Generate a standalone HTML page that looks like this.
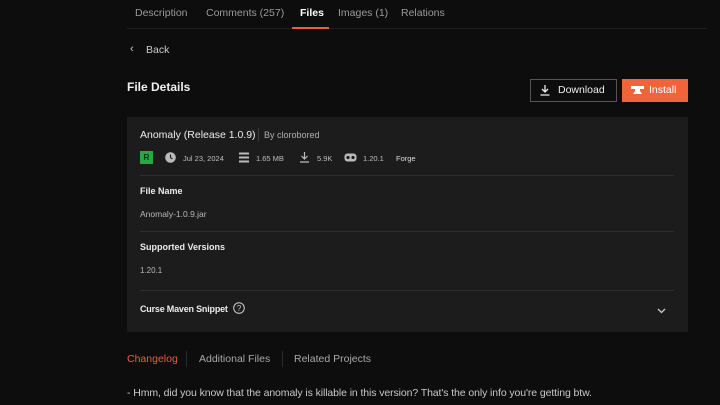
<!DOCTYPE html><html><head><style>
*{margin:0;padding:0;box-sizing:border-box}
body{width:720px;height:405px;overflow:hidden;background:#0d0d0d;font-family:"Liberation Sans",sans-serif;color:#e6e6e6;position:relative}
.a{position:absolute;white-space:nowrap}
.tab{font-size:10.5px;color:#9a9a9a;top:7px}
.line{position:absolute;left:140px;width:534px;height:1px;background:#2e2e2e}
.lbl{font-size:9px;font-weight:bold;color:#ececec}
.val{font-size:8.5px;color:#b8b8b8}
.m{font-size:7.5px;color:#bdbdbd;top:154px}
</style></head><body>
<div class="a" style="left:127px;top:28px;width:580px;height:1px;background:#1f1f1f"></div>
<div class="a tab" style="left:135px">Description</div>
<div class="a tab" style="left:206px">Comments (257)</div>
<div class="a tab" style="left:300px;color:#fff;font-weight:bold">Files</div>
<div class="a" style="left:292px;top:27px;width:37px;height:2px;background:#e8603c"></div>
<div class="a tab" style="left:338px">Images (1)</div>
<div class="a tab" style="left:401px">Relations</div>
<div class="a" style="left:130px;top:43px;font-size:11px;color:#ccc">‹</div>
<div class="a" style="left:146px;top:44px;font-size:10.5px;color:#ccc">Back</div>
<div class="a" style="left:127px;top:80px;font-size:12px;font-weight:bold;color:#f0f0f0">File Details</div>
<div class="a" style="left:530px;top:79px;width:87px;height:23px;border:1px solid #555;color:#eee;font-size:10.5px;line-height:21px;padding-left:27px">Download</div>
<svg class="a" style="left:539px;top:84px" width="12" height="12" viewBox="0 0 12 12" fill="none" stroke="#eee" stroke-width="1.3"><path d="M6 1v7M3 5l3 3 3-3M1.5 11h9"/></svg>
<div class="a" style="left:622px;top:79px;width:66px;height:23px;background:#f0643a;color:#fff;font-size:10.5px;line-height:23px;padding-left:27px">Install</div>
<svg class="a" style="left:631px;top:85px" width="13" height="11" viewBox="0 0 13 11" fill="#fff"><path d="M0 1h13v3H9v2l2 3H2l2-3V4H0z"/></svg>
<div class="a" style="left:127px;top:117px;width:561px;height:215px;background:#1c1c1c"></div>
<div class="a" style="left:140px;top:129px;font-size:10.5px;color:#eee">Anomaly (Release 1.0.9)</div>
<div class="a" style="left:258px;top:128px;width:1px;height:13px;background:#3a3a3a"></div>
<div class="a" style="left:264px;top:130px;font-size:9px;color:#b0b0b0">By clorobored</div>
<div class="a" style="left:140px;top:151px;width:13px;height:13px;background:#27a844;color:#0b3d14;font-size:8.5px;line-height:13px;text-align:center;font-weight:bold">R</div>
<svg class="a" style="left:165px;top:152px" width="11" height="11"><circle cx="5.5" cy="5.5" r="5.3" fill="#bbb"/><path d="M5.5 2.5v3.2l2 1.2" stroke="#1c1c1c" stroke-width="1.1" fill="none"/></svg>
<div class="a m" style="left:183px">Jul 23, 2024</div>
<svg class="a" style="left:239px;top:152px" width="10" height="11" fill="#bbb"><rect y="0.5" width="10" height="2"/><rect y="4.5" width="10" height="2"/><rect y="8.5" width="10" height="2"/></svg>
<div class="a m" style="left:256px">1.65 MB</div>
<svg class="a" style="left:299px;top:151px" width="11" height="12" fill="none" stroke="#bbb" stroke-width="1.2"><path d="M5.5 1v7M2.5 5l3 3 3-3M1 11h9"/></svg>
<div class="a m" style="left:317px">5.9K</div>
<svg class="a" style="left:344px;top:153px" width="13" height="9"><rect x="0.5" y="0.5" width="12" height="8" rx="3" fill="#bbb"/><circle cx="4" cy="4.5" r="1.6" fill="#1c1c1c"/><circle cx="9" cy="4.5" r="1.6" fill="#1c1c1c"/></svg>
<div class="a m" style="left:363px">1.20.1</div>
<div class="a m" style="left:396px;color:#ddd">Forge</div>
<div class="line" style="top:175px"></div>
<div class="a lbl" style="left:140px;top:186px">File Name</div>
<div class="a val" style="left:140px;top:209px">Anomaly-1.0.9.jar</div>
<div class="line" style="top:231px"></div>
<div class="a lbl" style="left:140px;top:242px">Supported Versions</div>
<div class="a val" style="left:140px;top:266px;font-size:8px">1.20.1</div>
<div class="line" style="top:290px"></div>
<div class="a lbl" style="left:140px;top:304px;letter-spacing:-0.2px">Curse Maven Snippet</div>
<svg class="a" style="left:233px;top:302px" width="12" height="12" fill="none" stroke="#ccc"><circle cx="6" cy="6" r="5.3"/><text x="6" y="9" font-size="8" text-anchor="middle" fill="#ccc" stroke="none" font-family="Liberation Sans">?</text></svg>
<svg class="a" style="left:657px;top:308px" width="9" height="6" fill="none" stroke="#ccc" stroke-width="1.3"><path d="M1 1l3.5 3.5L8 1"/></svg>
<div class="a" style="left:127px;top:353px;font-size:10.5px;color:#e8603c">Changelog</div>
<div class="a" style="left:186px;top:351px;width:1px;height:16px;background:#2a2a2a"></div>
<div class="a" style="left:199px;top:353px;font-size:10.5px;color:#a8a8a8">Additional Files</div>
<div class="a" style="left:282px;top:351px;width:1px;height:16px;background:#2a2a2a"></div>
<div class="a" style="left:294px;top:353px;font-size:10.5px;color:#a8a8a8">Related Projects</div>
<div class="a" style="left:127px;top:387px;font-size:10.5px;letter-spacing:-0.1px;color:#c8c8c8">- Hmm, did you know that the anomaly is killable in this version? That's the only info you're getting btw.</div>
</body></html>
